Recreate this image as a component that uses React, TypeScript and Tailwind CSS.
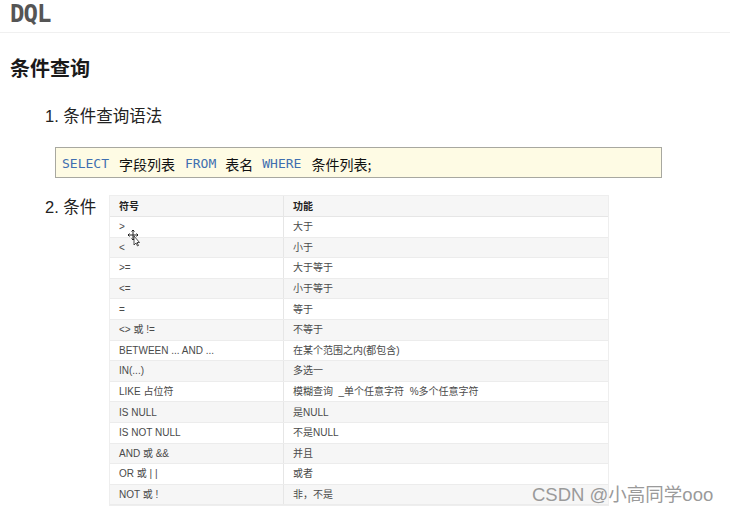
import React from "react";

const rows: [string, string][] = [
  [">", "大于"],
  ["<", "小于"],
  [">=", "大于等于"],
  ["<=", "小于等于"],
  ["=", "等于"],
  ["<> 或 !=", "不等于"],
  ["BETWEEN ... AND ...", "在某个范围之内(都包含)"],
  ["IN(...)", "多选一"],
  ["LIKE 占位符", "模糊查询\u00a0\u00a0_单个任意字符\u00a0\u00a0%多个任意字符"],
  ["IS NULL", "是NULL"],
  ["IS NOT NULL", "不是NULL"],
  ["AND 或 &&", "并且"],
  ["OR 或 | |", "或者"],
  ["NOT 或 !", "非，不是"],
];

const sans = "font-['Liberation_Sans','Noto_Sans_CJK_SC',sans-serif]";

export default function App() {
  return (
    <div className="relative w-[730px] h-[513px] overflow-hidden bg-white text-[#222]">
      <div className="h-[33px] border-b border-[#f0f0f0] pl-[10px]">
        <div className="font-['DejaVu_Sans_Mono',monospace] font-bold text-[24px] leading-[29px] text-[#555] tracking-[-1px]">
          DQL
        </div>
      </div>
      <div className="pl-[10px] mt-[23px] font-['Noto_Sans_CJK_SC',sans-serif] font-bold text-[20px] leading-[24px] text-[#1a1a1a]">
        条件查询
      </div>
      <div className={`pl-[45px] mt-[24px] text-[16.5px] leading-[24px] text-[#222] ${sans}`}>
        1. 条件查询语法
      </div>
      <div className="ml-[55px] mt-[19px] w-[607px] h-[31px] border border-[#a8a8a0] bg-[#fefbe4] pl-[6px] pt-[3px] text-[13px] leading-[20px] flex items-center whitespace-pre">
        <span className="text-[#3f6fb0] font-['DejaVu_Sans_Mono',monospace]">SELECT</span>
        <span className="ml-[10px] text-[14px] text-[#111] font-['Noto_Sans_CJK_SC',sans-serif]">字段列表</span>
        <span className="ml-[10px] text-[#3f6fb0] font-['DejaVu_Sans_Mono',monospace]">FROM</span>
        <span className="ml-[9px] text-[14px] text-[#111] font-['Noto_Sans_CJK_SC',sans-serif]">表名</span>
        <span className="ml-[9px] text-[#3f6fb0] font-['DejaVu_Sans_Mono',monospace]">WHERE</span>
        <span className="ml-[10px] text-[14px] text-[#111] font-['Noto_Sans_CJK_SC',sans-serif]">条件列表;</span>
      </div>
      <div className="flex mt-[17px]">
        <div className={`pl-[45px] w-[109px] text-[16.5px] leading-[24px] text-[#222] ${sans}`}>
          2. 条件
        </div>
        <div className={`w-[500px] border border-[#eeeeee] text-[10px] text-[#4a4a4a] ${sans}`}>
          <div className="flex h-[21px] items-center bg-[#f6f6f6] border-b border-[#e6e6e6] font-bold text-[#222]">
            <div className="w-[174px] pl-[9px] h-full flex items-center border-r border-[#e6e6e6]">符号</div>
            <div className="flex-1 pl-[9px]">功能</div>
          </div>
          {rows.map(([a, b], i) => (
            <div
              key={i}
              className={`flex h-[20.6px] items-center border-b border-[#ececec] ${i % 2 === 1 ? "bg-[#f6f6f6]" : "bg-white"}`}
            >
              <div className="w-[174px] pl-[9px] h-full flex items-center border-r border-[#e6e6e6]">{a}</div>
              <div className="flex-1 pl-[9px] whitespace-pre">{b}</div>
            </div>
          ))}
        </div>
      </div>
      <svg className="absolute left-[127px] top-[229px]" width="14" height="18" viewBox="0 0 14 18">
        <g stroke="#222" strokeWidth="1" fill="none">
          <path d="M6 1 L6 11 M1 6 L11 6" />
          <path d="M4.5 2.5 L6 1 L7.5 2.5 M4.5 9.5 L6 11 L7.5 9.5 M2.5 4.5 L1 6 L2.5 7.5 M9.5 4.5 L11 6 L9.5 7.5" />
        </g>
        <path d="M7 7 L7 16 L9 14 L10.5 17 L11.5 16.5 L10 13.5 L12.5 13.5 Z" fill="#fff" stroke="#222" strokeWidth="0.8" />
      </svg>
      <div className="absolute left-[532px] top-[483px] text-[18.5px] leading-[24px] text-[#9a9a9a] font-['Liberation_Sans','Noto_Sans_CJK_SC',sans-serif]">
        CSDN @小高同学ooo
      </div>
    </div>
  );
}
